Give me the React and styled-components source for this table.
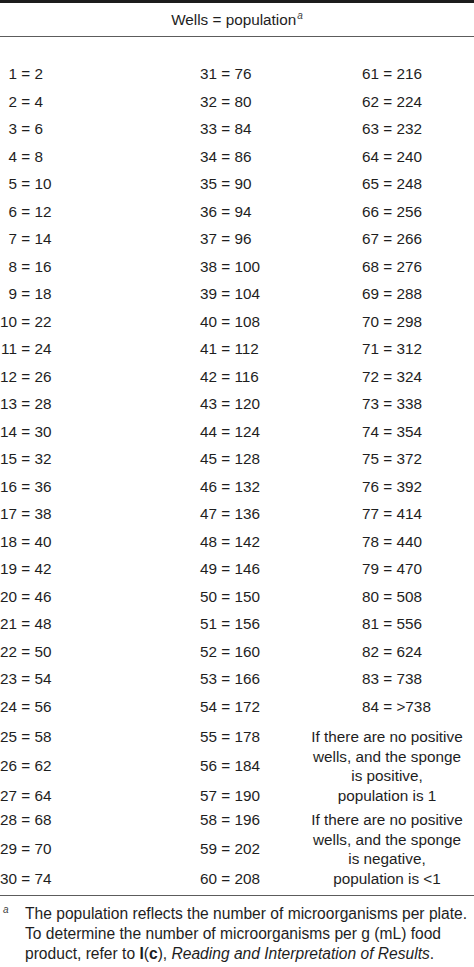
import styled, { createGlobalStyle } from 'styled-components';

const GlobalStyle = createGlobalStyle`
  html, body {
    margin: 0;
    padding: 0;
    background: #ffffff;
  }
  body {
    font-family: "Liberation Sans", Arial, sans-serif;
    color: #1e1e1e;
  }
`;

const Page = styled.div`
  width: 474px;
  font-size: 15.3px;
`;

const Header = styled.div`
  border-top: 3px solid #1c1c1c;
  border-bottom: 1px solid #5c5c5c;
  height: 33px;
  display: flex;
  align-items: center;
  justify-content: center;
`;

const Sup = styled.sup`
  font-style: italic;
  font-size: 10px;
  line-height: 0;
  margin-left: 1px;
  vertical-align: 6px;
  color: #444;
`;

const Body = styled.div`
  padding-top: 23px;
  padding-bottom: 7px;
  border-bottom: 1px solid #5c5c5c;
`;

const Row = styled.div`
  display: grid;
  grid-template-columns: 200px 108px 166px;
  height: 27.5px;
  align-items: center;
`;

const GroupRow = styled.div`
  display: grid;
  grid-template-columns: 200px 108px 166px;
  padding-top: ${(p) => p.$top}px;
  line-height: 19.5px;
`;

const Stack = styled.div`
  display: flex;
  flex-direction: column;
  justify-content: space-between;
`;

const Entry = styled.div`
  display: flex;
  white-space: pre;
  line-height: 19.5px;
  padding-left: ${(p) => p.$indent || 0}px;
`;

const Num = styled.span`
  display: inline-block;
  width: 17px;
  text-align: right;
`;

const Note = styled.div`
  text-align: center;
  padding-right: 8px;
  white-space: nowrap;
`;

const Footnote = styled.div`
  display: flex;
  padding-top: 8px;
  line-height: 20px;
  font-size: 15.6px;
`;

const Mark = styled.span`
  width: 25px;
  flex-shrink: 0;
  font-style: italic;
  font-size: 10px;
  line-height: 12px;
  padding-left: 3px;
  box-sizing: border-box;
  color: #444;
`;

const FootText = styled.p`
  margin: 0;
  white-space: nowrap;
`;

const Entry3 = ({ w, p, indent }) => (
  <Entry $indent={indent}>
    <Num>{w}</Num>
    {` = ${p}`}
  </Entry>
);

const col1 = [2, 4, 6, 8, 10, 12, 14, 16, 18, 22, 24, 26, 28, 30, 32, 36, 38, 40, 42, 46, 48, 50, 54, 56, 58, 62, 64, 68, 70, 74];
const col2 = [76, 80, 84, 86, 90, 94, 96, 100, 104, 108, 112, 116, 120, 124, 128, 132, 136, 142, 146, 150, 156, 160, 166, 172, 178, 184, 190, 196, 202, 208];
const col3 = [216, 224, 232, 240, 248, 256, 266, 276, 288, 298, 312, 324, 338, 354, 372, 392, 414, 440, 470, 508, 556, 624, 738, '>738'];

const groups = [
  { from: 24, top: 7, lines: ['If there are no positive', 'wells, and the sponge', 'is positive,', 'population is 1'] },
  { from: 27, top: 5, lines: ['If there are no positive', 'wells, and the sponge', 'is negative,', 'population is <1'] },
];

export default function App() {
  return (
    <Page>
      <GlobalStyle />
      <Header>
        <span>
          Wells = population<Sup>a</Sup>
        </span>
      </Header>
      <Body>
        {col3.map((v, i) => (
          <Row key={i}>
            <Entry3 w={i + 1} p={col1[i]} />
            <Entry3 w={i + 31} p={col2[i]} />
            <Entry3 w={i + 61} p={v} indent={54} />
          </Row>
        ))}
        {groups.map((g) => (
          <GroupRow key={g.from} $top={g.top}>
            <Stack>
              {[0, 1, 2].map((k) => (
                <Entry3 key={k} w={g.from + k + 1} p={col1[g.from + k]} />
              ))}
            </Stack>
            <Stack>
              {[0, 1, 2].map((k) => (
                <Entry3 key={k} w={g.from + k + 31} p={col2[g.from + k]} />
              ))}
            </Stack>
            <Note>
              {g.lines.map((l, k) => (
                <div key={k}>{l}</div>
              ))}
            </Note>
          </GroupRow>
        ))}
      </Body>
      <Footnote>
        <Mark>a</Mark>
        <FootText>
          The population reflects the number of microorganisms per plate.
          <br />
          To determine the number of microorganisms per g (mL) food
          <br />
          product, refer to <b>I</b>(<b>c</b>), <i>Reading and Interpretation of Results</i>.
        </FootText>
      </Footnote>
    </Page>
  );
}
